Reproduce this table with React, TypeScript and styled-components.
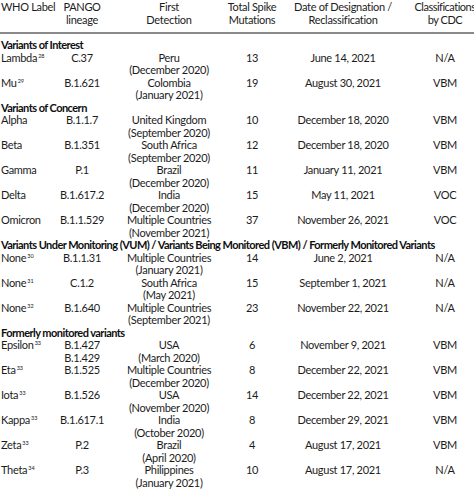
import React from 'react';
import styled, { createGlobalStyle } from 'styled-components';

const GlobalStyle = createGlobalStyle`
  html, body {
    margin: 0;
    padding: 0;
    background: #ffffff;
    overflow: hidden;
  }
  body {
    font-family: Lato, "Liberation Sans", sans-serif;
  }
`;

const COLS = '50px 64px 110px 56px 126px 78px';

const Table = styled.div`
  width: 484px;
  padding-top: 1px;
  color: #1c1c1c;
  font-size: 11px;
  line-height: 12.5px;
  letter-spacing: -0.3px;
`;

const HeadRow = styled.div`
  display: grid;
  grid-template-columns: ${COLS};
  padding-bottom: 6px;
  border-bottom: 2px solid #8a8a8a;
  margin-bottom: 5px;
`;

const Row = styled.div`
  display: grid;
  grid-template-columns: ${COLS};
`;

const Cell = styled.div<{ $left?: boolean; $tight?: boolean }>`
  text-align: ${(p) => (p.$left ? 'left' : 'center')};
  padding-left: ${(p) => (p.$left ? '1px' : '0')};
  letter-spacing: ${(p) => (p.$tight ? '-0.5px' : 'inherit')};
  white-space: nowrap;
`;

const Section = styled.div`
  font-weight: 700;
  color: #0e0e0e;
  padding-left: 1px;
  letter-spacing: -0.55px;
  white-space: nowrap;
`;

const Sup = styled.sup`
  font-size: 5.5px;
  line-height: 0;
  vertical-align: 4px;
  margin-left: 1px;
  letter-spacing: 0;
`;

type Variant = {
  name: string;
  ref?: number;
  pango: string[];
  place: string;
  when: string;
  spikes: number;
  date: string;
  cdc: string;
};

type Group = { title: string; rows: Variant[] };

const groups: Group[] = [
  {
    title: 'Variants of Interest',
    rows: [
      { name: 'Lambda', ref: 28, pango: ['C.37'], place: 'Peru', when: '(December 2020)', spikes: 13, date: 'June 14, 2021', cdc: 'N/A' },
      { name: 'Mu', ref: 29, pango: ['B.1.621'], place: 'Colombia', when: '(January 2021)', spikes: 19, date: 'August 30, 2021', cdc: 'VBM' },
    ],
  },
  {
    title: 'Variants of Concern',
    rows: [
      { name: 'Alpha', pango: ['B.1.1.7'], place: 'United Kingdom', when: '(September 2020)', spikes: 10, date: 'December 18, 2020', cdc: 'VBM' },
      { name: 'Beta', pango: ['B.1.351'], place: 'South Africa', when: '(September 2020)', spikes: 12, date: 'December 18, 2020', cdc: 'VBM' },
      { name: 'Gamma', pango: ['P.1'], place: 'Brazil', when: '(December 2020)', spikes: 11, date: 'January 11, 2021', cdc: 'VBM' },
      { name: 'Delta', pango: ['B.1.617.2'], place: 'India', when: '(December 2020)', spikes: 15, date: 'May 11, 2021', cdc: 'VOC' },
      { name: 'Omicron', pango: ['B.1.1.529'], place: 'Multiple Countries', when: '(November 2021)', spikes: 37, date: 'November 26, 2021', cdc: 'VOC' },
    ],
  },
  {
    title: 'Variants Under Monitoring (VUM) / Variants Being Monitored (VBM) / Formerly Monitored Variants',
    rows: [
      { name: 'None', ref: 30, pango: ['B.1.1.31'], place: 'Multiple Countries', when: '(January 2021)', spikes: 14, date: 'June 2, 2021', cdc: 'N/A' },
      { name: 'None', ref: 31, pango: ['C.1.2'], place: 'South Africa', when: '(May 2021)', spikes: 15, date: 'September 1, 2021', cdc: 'N/A' },
      { name: 'None', ref: 32, pango: ['B.1.640'], place: 'Multiple Countries', when: '(September 2021)', spikes: 23, date: 'November 22, 2021', cdc: 'N/A' },
    ],
  },
  {
    title: 'Formerly monitored variants',
    rows: [
      { name: 'Epsilon', ref: 33, pango: ['B.1.427', 'B.1.429'], place: 'USA', when: '(March 2020)', spikes: 6, date: 'November 9, 2021', cdc: 'VBM' },
      { name: 'Eta', ref: 33, pango: ['B.1.525'], place: 'Multiple Countries', when: '(December 2020)', spikes: 8, date: 'December 22, 2021', cdc: 'VBM' },
      { name: 'Iota', ref: 33, pango: ['B.1.526'], place: 'USA', when: '(November 2020)', spikes: 14, date: 'December 22, 2021', cdc: 'VBM' },
      { name: 'Kappa', ref: 33, pango: ['B.1.617.1'], place: 'India', when: '(October 2020)', spikes: 8, date: 'December 29, 2021', cdc: 'VBM' },
      { name: 'Zeta', ref: 33, pango: ['P.2'], place: 'Brazil', when: '(April 2020)', spikes: 4, date: 'August 17, 2021', cdc: 'VBM' },
      { name: 'Theta', ref: 34, pango: ['P.3'], place: 'Philippines', when: '(January 2021)', spikes: 10, date: 'August 17, 2021', cdc: 'N/A' },
    ],
  },
];

const VariantRow = ({ v }: { v: Variant }) => (
  <Row>
    <Cell $left>
      {v.name}
      {v.ref && <Sup>{v.ref}</Sup>}
    </Cell>
    <Cell>
      {v.pango.map((p) => (
        <div key={p}>{p}</div>
      ))}
    </Cell>
    <Cell>
      <div>{v.place}</div>
      <div>{v.when}</div>
    </Cell>
    <Cell>{v.spikes}</Cell>
    <Cell>{v.date}</Cell>
    <Cell>{v.cdc}</Cell>
  </Row>
);

const App = () => (
  <>
    <GlobalStyle />
    <Table>
      <HeadRow>
        <Cell $left>WHO Label</Cell>
        <Cell>
          <div>PANGO</div>
          <div>lineage</div>
        </Cell>
        <Cell>
          <div>First</div>
          <div>Detection</div>
        </Cell>
        <Cell>
          <div>Total Spike</div>
          <div>Mutations</div>
        </Cell>
        <Cell>
          <div>Date of Designation /</div>
          <div>Reclassification</div>
        </Cell>
        <Cell $tight>
          <div>Classifications</div>
          <div>by CDC</div>
        </Cell>
      </HeadRow>
      {groups.map((g) => (
        <React.Fragment key={g.title}>
          <Section>{g.title}</Section>
          {g.rows.map((v) => (
            <VariantRow key={v.name + (v.ref ?? '')} v={v} />
          ))}
        </React.Fragment>
      ))}
    </Table>
  </>
);

export default App;
